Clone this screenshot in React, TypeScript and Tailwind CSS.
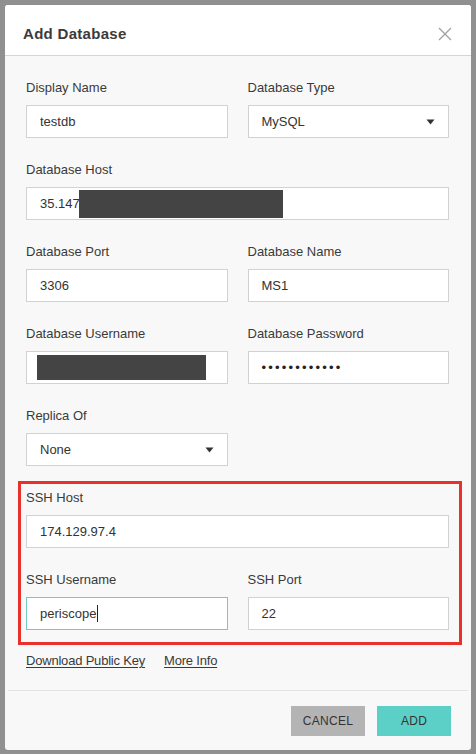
import React from "react";

const font = { fontFamily: '"Liberation Sans", Arial, sans-serif' };

function Label({ children }: { children: React.ReactNode }) {
  return <div className="h-[16px] mb-[9px] text-[13px] leading-[16px] text-[#3a3a3a]">{children}</div>;
}

function Input({ children, active }: { children?: React.ReactNode; active?: boolean }) {
  return (
    <div
      className={`h-[33px] bg-white border ${active ? "border-[#74cbc3]" : "border-[#d2d2d2]"} flex items-center pl-[13px] text-[13px] text-[#333]`}
    >
      {children}
    </div>
  );
}

function Select({ value }: { value: string }) {
  return (
    <div className="h-[33px] bg-white border border-[#d2d2d2] flex items-center pl-[13px] pr-[13px] text-[13px] text-[#333]">
      <span className="flex-1">{value}</span>
      <svg width="9" height="6" viewBox="0 0 9 6">
        <path d="M0.5 0.5 L8.5 0.5 L4.5 5.5 Z" fill="#333" />
      </svg>
    </div>
  );
}

function Field({ label, children }: { label: string; children: React.ReactNode }) {
  return (
    <div className="flex flex-col">
      <Label>{label}</Label>
      {children}
    </div>
  );
}

export default function App() {
  return (
    <div className="w-[476px] h-[754px] bg-[#909090] p-[5px] overflow-hidden" style={font}>
      <div className="w-[466px] h-[745px] bg-[#f8f8f8] rounded-[3px] flex flex-col overflow-hidden">
        <div className="h-[51px] bg-white border-b border-[#b7e3de] flex items-center pt-[8px] pl-[18px] pr-[19px] shrink-0">
          <div className="flex-1 text-[15px] font-bold text-[#3b3b3b] tracking-[0.3px]">Add Database</div>
          <svg width="14" height="14" viewBox="0 0 14 14">
            <path d="M1 1 L13 13 M13 1 L1 13" stroke="#a0a0a0" strokeWidth="1.3" />
          </svg>
        </div>
        <div className="pt-[24px] pl-[21px] pr-[22px] flex flex-col">
          <div className="grid grid-cols-2 gap-x-[20px]">
            <Field label="Display Name">
              <Input>testdb</Input>
            </Field>
            <Field label="Database Type">
              <Select value="MySQL" />
            </Field>
          </div>
          <div className="mt-[24px]">
            <Field label="Database Host">
              <Input>
                <span>35.147.</span>
                <span className="ml-[-4px] w-[204px] h-[28px] bg-[#444]" />
              </Input>
            </Field>
          </div>
          <div className="mt-[24px] grid grid-cols-2 gap-x-[20px]">
            <Field label="Database Port">
              <Input>3306</Input>
            </Field>
            <Field label="Database Name">
              <Input>MS1</Input>
            </Field>
          </div>
          <div className="mt-[24px] grid grid-cols-2 gap-x-[20px]">
            <Field label="Database Username">
              <div className="h-[33px] bg-white border border-[#d2d2d2] flex items-center pl-[10px]">
                <span className="w-[169px] h-[25px] bg-[#444]" />
              </div>
            </Field>
            <Field label="Database Password">
              <Input>
                <span className="tracking-[2.2px] text-[13px] leading-none text-[#222]">••••••••••••</span>
              </Input>
            </Field>
          </div>
          <div className="mt-[24px] grid grid-cols-2 gap-x-[20px]">
            <Field label="Replica Of">
              <Select value="None" />
            </Field>
          </div>
          <div className="mt-[15px] ml-[-8px] mr-[-13px] border-[3px] border-[#e8312a] pt-[6px] pb-[12px] pl-[5px] pr-[10px]">
            <Field label="SSH Host">
              <Input>174.129.97.4</Input>
            </Field>
            <div className="mt-[24px] grid grid-cols-2 gap-x-[20px]">
              <Field label="SSH Username">
                <Input active>
                  <span>periscope</span>
                  <span className="ml-[1px] w-[1px] h-[17px] bg-[#222]" />
                </Input>
              </Field>
              <Field label="SSH Port">
                <Input>22</Input>
              </Field>
            </div>
          </div>
          <div className="mt-[8px] flex gap-[19px] text-[13px] leading-[16px] text-[#3a3a3a] tracking-[-0.2px]">
            <span className="underline underline-offset-2">Download Public Key</span>
            <span className="underline underline-offset-2">More Info</span>
          </div>
        </div>
        <div className="mt-[21px] mx-[3px] border-t border-[#e2e2e2]" />
        <div className="pt-[15px] pr-[20px] flex justify-end gap-[12px]">
          <div className="w-[74px] h-[30px] bg-[#b4b4b4] flex items-center justify-center text-[12px] text-[#333] tracking-[0.3px]">
            CANCEL
          </div>
          <div className="w-[74px] h-[30px] bg-[#5ccfc6] flex items-center justify-center text-[12px] text-[#333] tracking-[0.3px]">
            ADD
          </div>
        </div>
      </div>
    </div>
  );
}
